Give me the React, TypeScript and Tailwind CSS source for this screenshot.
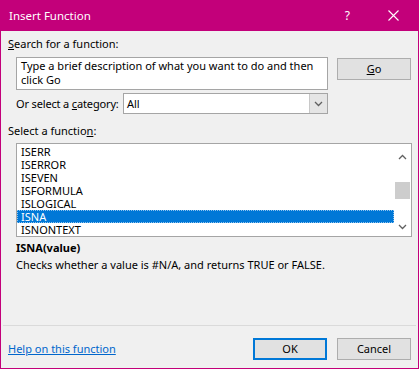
import React from "react";

const functions = [
  "ISERR",
  "ISERROR",
  "ISEVEN",
  "ISFORMULA",
  "ISLOGICAL",
  "ISNA",
  "ISNONTEXT",
];

function Chevron({ up = false }: { up?: boolean }) {
  return (
    <svg width="9" height="6" viewBox="0 0 9 6" fill="none">
      <path
        d={up ? "M1 5 L4.5 1.5 L8 5" : "M1 1 L4.5 4.5 L8 1"}
        stroke="#606060"
        strokeWidth="1.3"
      />
    </svg>
  );
}

export default function App() {
  const selected = "ISNA";

  return (
    <div
      className="w-[419px] h-[369px] bg-[#c3007a] flex flex-col px-px pb-px text-[11px] text-black"
      style={{ fontFamily: '"Noto Sans", "Open Sans", sans-serif' }}
    >
      {/* title bar */}
      <div className="h-[31px] flex items-center text-white shrink-0">
        <span className="ml-[8px] text-[11.5px]">Insert Function</span>
        <span className="ml-auto mr-[38px] text-[12px]">?</span>
        <svg width="11" height="11" viewBox="0 0 11 11" className="mr-[19px]">
          <path d="M0.5 0.5 L10.5 10.5 M10.5 0.5 L0.5 10.5" stroke="white" strokeWidth="1.1" />
        </svg>
      </div>

      <div className="flex-1 bg-[#f0f0f0] flex flex-col">
        <div className="pt-[5px] pl-[7px] leading-[16px]">
          <u>S</u>earch for a function:
        </div>

        <div className="mt-[5px] flex items-start">
          <div className="ml-[15px] w-[312px] h-[33px] bg-white border border-[#a5a5a5] px-[4px] leading-[14px] pt-px">
            Type a brief description of what you want to do and then click Go
          </div>
          <button className="ml-[9px] mt-px w-[74px] h-[22px] bg-[#e1e1e1] border border-[#adadad] leading-[18px]">
            <u>G</u>o
          </button>
        </div>

        <div className="mt-[3px] flex items-center h-[21px]">
          <span className="ml-[15px] w-[107px] leading-[16px] whitespace-nowrap tracking-[-0.15px]">
            Or select a <u>c</u>ategory:
          </span>
          <div className="w-[205px] h-[21px] bg-white border border-[#a5a5a5] flex items-center">
            <span className="pl-[3px] flex-1 leading-[16px]">All</span>
            <div className="w-[18px] h-[19px] bg-[#e5e5e5] border-l border-[#c8c8c8] flex items-center justify-center">
              <Chevron />
            </div>
          </div>
        </div>

        <div className="mt-[9px] pl-[7px] leading-[16px]">
          Select a functio<u>n</u>:
        </div>

        <div className="mt-[4px] ml-[15px] w-[396px] h-[94px] bg-white border border-[#a5a5a5] flex">
          <div className="flex-1 pt-px">
            {functions.map((f) => (
              <div
                key={f}
                className={
                  f === selected
                    ? "h-[13px] leading-[13px] pl-[4px] bg-[#0078d7] text-white outline outline-dotted outline-[#8fc4ef] -outline-offset-1"
                    : "h-[13px] leading-[13px] pl-[4px]"
                }
              >
                {f}
              </div>
            ))}
          </div>
          <div className="w-[17px] flex flex-col items-center">
            <div className="h-[17px] flex items-center justify-center mt-[4px]">
              <Chevron up />
            </div>
            <div className="mt-[17px] w-[15px] h-[17px] bg-[#cdcdcd]" />
            <div className="mt-auto h-[17px] flex items-center justify-center mb-[1px]">
              <Chevron />
            </div>
          </div>
        </div>

        <div className="mt-[2px] pl-[15px] leading-[17px] font-bold">ISNA(value)</div>
        <div className="pl-[15px] leading-[17px]">
          Checks whether a value is #N/A, and returns TRUE or FALSE.
        </div>

        <div className="mt-auto mx-[2px] border-t border-[#dadada] pt-[12px] pb-[8px] flex items-center">
          <a className="ml-[5px] text-[#0066cc] underline leading-[16px] cursor-pointer">
            Help on this function
          </a>
          <button className="ml-auto w-[74px] h-[22px] bg-[#e1e1e1] border-2 border-[#0078d7] leading-[18px]">
            OK
          </button>
          <button className="ml-[10px] mr-[5px] w-[74px] h-[22px] bg-[#e1e1e1] border border-[#adadad] leading-[18px]">
            Cancel
          </button>
        </div>
      </div>
    </div>
  );
}
